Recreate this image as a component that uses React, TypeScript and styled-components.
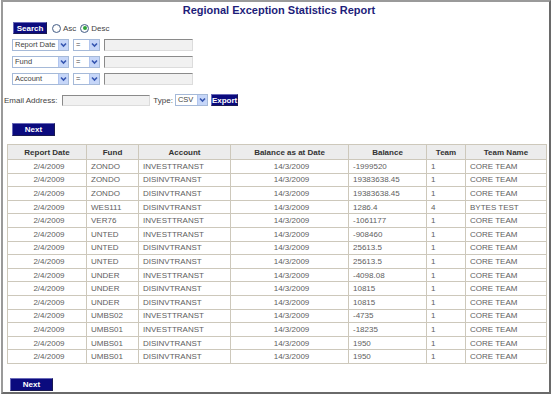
import React from "react";
import styled, { createGlobalStyle } from "styled-components";

const GlobalStyle = createGlobalStyle`
  html, body {
    margin: 0;
    padding: 0;
    background: #ffffff;
  }
  body {
    font-family: "Liberation Sans", Arial, sans-serif;
    font-size: 8px;
    color: #333;
  }
`;

const Frame = styled.div`
  box-sizing: border-box;
  width: 550px;
  height: 394px;
  margin-left: 1px;
  border: 2px solid;
  border-color: #9a9a9a #6a6a6a #6a6a6a #9a9a9a;
  display: flex;
  flex-direction: column;
  background: #fff;
`;

const Title = styled.h1`
  margin: 2px 0 0 0;
  padding-left: 6px;
  font-size: 11px;
  line-height: 13px;
  font-weight: bold;
  text-align: center;
  color: #1d1d7a;
`;

const Row = styled.div<{ $top: number; $left: number; $h?: number }>`
  display: flex;
  align-items: center;
  margin-top: ${(p) => p.$top}px;
  padding-left: ${(p) => p.$left}px;
  height: ${(p) => p.$h ?? 12}px;
`;

const NavyButton = styled.button<{ $w: number; $h?: number }>`
  box-sizing: border-box;
  width: ${(p) => p.$w}px;
  height: ${(p) => p.$h ?? 12}px;
  padding: 0;
  background: #0b0b7e;
  color: #fff;
  font-family: "Liberation Sans", Arial, sans-serif;
  font-size: 8px;
  font-weight: bold;
  border: 1px solid;
  border-color: #6a6ab8 #1a1a50 #1a1a50 #6a6ab8;
  cursor: pointer;
`;

const RadioLabel = styled.label`
  display: flex;
  align-items: center;
  color: #444;
  font-size: 8px;
`;

const RadioDot = styled.span<{ $on?: boolean }>`
  box-sizing: border-box;
  width: 9px;
  height: 9px;
  border-radius: 50%;
  border: 1px solid #47618a;
  background: radial-gradient(circle, #ffffff 40%, #e4e4e4 100%);
  margin-right: 2px;
  display: flex;
  align-items: center;
  justify-content: center;
  &::after {
    content: "";
    display: ${(p) => (p.$on ? "block" : "none")};
    width: 4px;
    height: 4px;
    border-radius: 50%;
    background: #2fa33a;
  }
`;

const SelectBox = styled.div<{ $w: number }>`
  box-sizing: border-box;
  width: ${(p) => p.$w}px;
  height: 12px;
  border: 1px solid #a5b9d8;
  background: #fff;
  display: flex;
  align-items: stretch;
`;

const SelectText = styled.span`
  flex: 1;
  min-width: 0;
  padding-left: 2px;
  line-height: 10px;
  font-size: 7.5px;
  color: #444;
  white-space: nowrap;
  overflow: hidden;
`;

const ArrowBox = styled.span`
  flex: none;
  width: 9px;
  background: #c6d6f8;
  border-left: 1px solid #b2c6ee;
  display: flex;
  align-items: center;
  justify-content: center;
`;

const TextInput = styled.input<{ $w: number; $h?: number }>`
  box-sizing: border-box;
  width: ${(p) => p.$w}px;
  height: ${(p) => p.$h ?? 12}px;
  padding: 0;
  border: 1px solid;
  border-color: #8a8a8a #dcdcdc #dcdcdc #8a8a8a;
  background: #f1f1f1;
`;

const Label = styled.span<{ $mr: number }>`
  color: #444;
  margin-right: ${(p) => p.$mr}px;
`;

const Gap = styled.span<{ $w: number }>`
  display: inline-block;
  flex: none;
  width: ${(p) => p.$w}px;
`;

const Table = styled.table`
  margin-top: 8px;
  margin-left: 4px;
  width: 539px;
  border-collapse: collapse;
  table-layout: fixed;
  border: 1px solid #bdb8ac;
`;

const Th = styled.th`
  height: 14px;
  padding: 0;
  background: #ececec;
  border: 1px solid #cdc8bb;
  font-size: 8px;
  font-weight: bold;
  color: #333;
  text-align: center;
  overflow: hidden;
  white-space: nowrap;
`;

const Td = styled.td<{ $align?: string }>`
  height: 12.6px;
  padding: 0 0 0 4px;
  border: 1px solid #cdc8bb;
  font-size: 8px;
  color: #606060;
  text-align: ${(p) => p.$align ?? "left"};
  white-space: nowrap;
  overflow: hidden;
`;

const BottomNext = styled.div`
  margin-top: auto;
  margin-bottom: 1px;
  padding-left: 7px;
`;

function Chevron() {
  return (
    <svg width="7" height="6" viewBox="0 0 7 6">
      <path d="M1 1.5 L3.5 4 L6 1.5" fill="none" stroke="#3656b0" strokeWidth="1.6" />
    </svg>
  );
}

function FakeSelect({ w, value }: { w: number; value: string }) {
  return (
    <SelectBox $w={w}>
      <SelectText>{value}</SelectText>
      <ArrowBox>
        <Chevron />
      </ArrowBox>
    </SelectBox>
  );
}

const columns = [
  { label: "Report Date", w: 79 },
  { label: "Fund", w: 52 },
  { label: "Account", w: 92 },
  { label: "Balance as at Date", w: 118 },
  { label: "Balance", w: 78 },
  { label: "Team", w: 39 },
  { label: "Team Name", w: 81 },
];

const rows: [string, string, string, string, string, string, string][] = [
  ["2/4/2009", "ZONDO", "INVESTTRANST", "14/3/2009", "-1999520", "1", "CORE TEAM"],
  ["2/4/2009", "ZONDO", "DISINVTRANST", "14/3/2009", "19383638.45", "1", "CORE TEAM"],
  ["2/4/2009", "ZONDO", "DISINVTRANST", "14/3/2009", "19383638.45", "1", "CORE TEAM"],
  ["2/4/2009", "WES111", "DISINVTRANST", "14/3/2009", "1286.4", "4", "BYTES TEST"],
  ["2/4/2009", "VER76", "INVESTTRANST", "14/3/2009", "-1061177", "1", "CORE TEAM"],
  ["2/4/2009", "UNTED", "INVESTTRANST", "14/3/2009", "-908460", "1", "CORE TEAM"],
  ["2/4/2009", "UNTED", "DISINVTRANST", "14/3/2009", "25613.5", "1", "CORE TEAM"],
  ["2/4/2009", "UNTED", "DISINVTRANST", "14/3/2009", "25613.5", "1", "CORE TEAM"],
  ["2/4/2009", "UNDER", "INVESTTRANST", "14/3/2009", "-4098.08", "1", "CORE TEAM"],
  ["2/4/2009", "UNDER", "DISINVTRANST", "14/3/2009", "10815", "1", "CORE TEAM"],
  ["2/4/2009", "UNDER", "DISINVTRANST", "14/3/2009", "10815", "1", "CORE TEAM"],
  ["2/4/2009", "UMBS02", "INVESTTRANST", "14/3/2009", "-4735", "1", "CORE TEAM"],
  ["2/4/2009", "UMBS01", "INVESTTRANST", "14/3/2009", "-18235", "1", "CORE TEAM"],
  ["2/4/2009", "UMBS01", "DISINVTRANST", "14/3/2009", "1950", "1", "CORE TEAM"],
  ["2/4/2009", "UMBS01", "DISINVTRANST", "14/3/2009", "1950", "1", "CORE TEAM"],
];

const filters = ["Report Date", "Fund", "Account"];

export default function App() {
  return (
    <>
      <GlobalStyle />
      <Frame>
        <Title>Regional Exception Statistics Report</Title>

        <Row $top={5} $left={10}>
          <NavyButton $w={34}>Search</NavyButton>
          <Gap $w={5} />
          <RadioLabel>
            <RadioDot />
            Asc
          </RadioLabel>
          <Gap $w={4} />
          <RadioLabel>
            <RadioDot $on />
            Desc
          </RadioLabel>
        </Row>

        {filters.map((f) => (
          <Row key={f} $top={5} $left={9}>
            <FakeSelect w={57} value={f} />
            <Gap $w={4} />
            <FakeSelect w={27} value="=" />
            <Gap $w={4} />
            <TextInput $w={89} />
          </Row>
        ))}

        <Row $top={9} $left={1}>
          <Label $mr={5}>Email Address:</Label>
          <TextInput $w={88} $h={11} />
          <Gap $w={3} />
          <Label $mr={2}>Type:</Label>
          <FakeSelect w={33} value="CSV" />
          <Gap $w={3} />
          <NavyButton $w={27}>Export</NavyButton>
        </Row>

        <Row $top={17} $left={9} $h={13}>
          <NavyButton $w={43} $h={13}>Next</NavyButton>
        </Row>

        <Table>
          <colgroup>
            {columns.map((c) => (
              <col key={c.label} style={{ width: c.w }} />
            ))}
          </colgroup>
          <thead>
            <tr>
              {columns.map((c) => (
                <Th key={c.label}>{c.label}</Th>
              ))}
            </tr>
          </thead>
          <tbody>
            {rows.map((r, i) => (
              <tr key={i}>
                <Td $align="center">{r[0]}</Td>
                <Td>{r[1]}</Td>
                <Td>{r[2]}</Td>
                <Td $align="center">{r[3]}</Td>
                <Td>{r[4]}</Td>
                <Td>{r[5]}</Td>
                <Td>{r[6]}</Td>
              </tr>
            ))}
          </tbody>
        </Table>

        <BottomNext>
          <NavyButton $w={43} $h={13}>Next</NavyButton>
        </BottomNext>
      </Frame>
    </>
  );
}
